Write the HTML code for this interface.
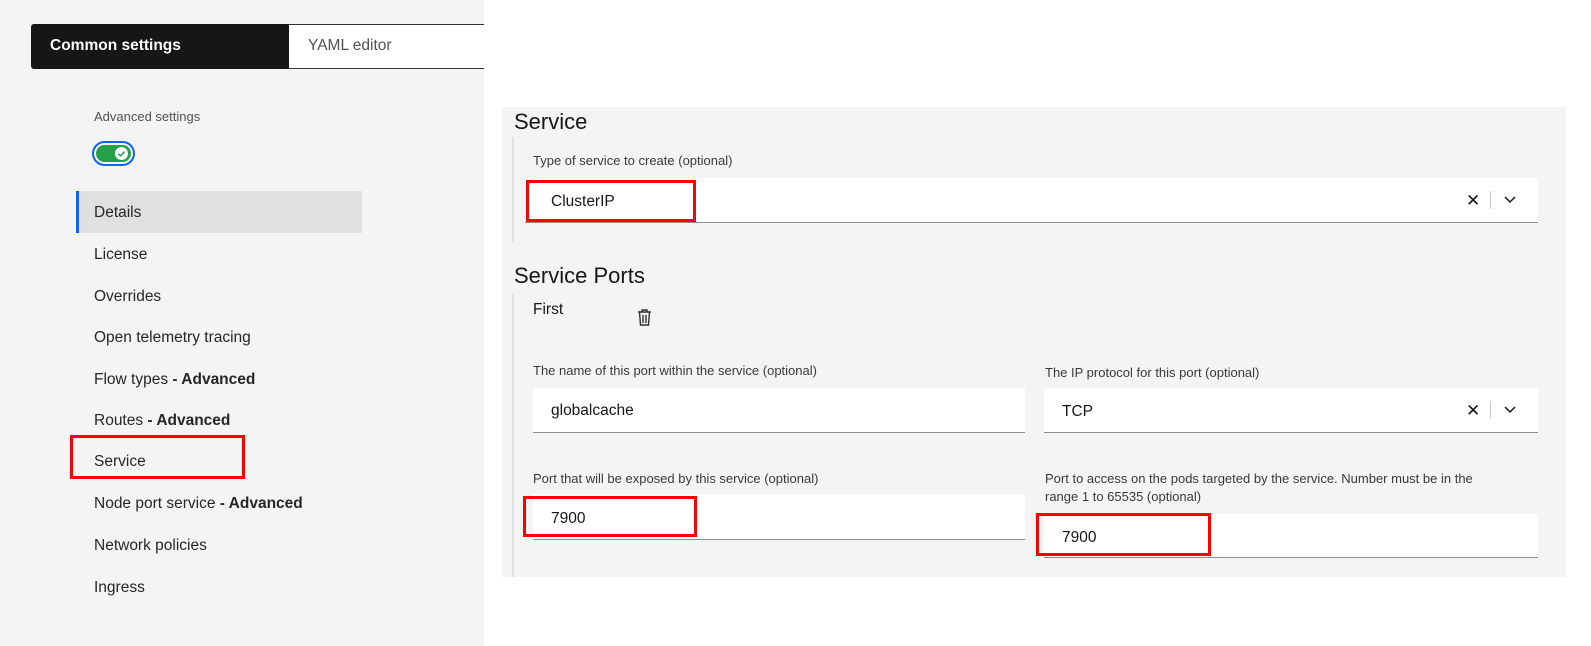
<!DOCTYPE html>
<html><head><meta charset="utf-8"><style>
*{box-sizing:border-box;margin:0;padding:0}
body{width:1591px;height:646px;background:#fff;font-family:"Liberation Sans",sans-serif;color:#161616;position:relative;overflow:hidden}
.a{position:absolute}
.left{left:0;top:0;width:484px;height:646px;background:#f4f4f4}
.nav{left:94px;font-size:15.5px;color:#262626;line-height:20px}
.lbl{font-size:13px;color:#393939;line-height:16px}
.inp{background:#fff;border-bottom:1.5px solid #8d8d8d}
.val{font-size:15.5px;color:#161616}
.red{border:3px solid #f00}
</style></head><body>
<div class="a left"></div>
<div class="a" style="left:31px;top:24px;width:258px;height:45px;background:#161616;border-radius:3px 0 0 3px"></div>
<div class="a" style="left:50px;top:37px;font-size:15.5px;font-weight:bold;color:#fff">Common settings</div>
<div class="a" style="left:289px;top:24px;width:195px;height:45px;background:#fff;border-top:1px solid #333;border-bottom:1px solid #333"></div>
<div class="a" style="left:308px;top:37px;font-size:15.5px;color:#525252">YAML editor</div>
<div class="a lbl" style="left:94px;top:109px;color:#525252">Advanced settings</div>
<div class="a" style="left:92px;top:141px;width:43px;height:25px;border:2px solid #0f62fe;border-radius:13px;padding:2px"><div style="width:35px;height:17px;background:#24a148;border-radius:9px;position:relative"><div style="position:absolute;right:3px;top:2px;width:13px;height:13px;border-radius:50%;background:#fff"><svg width="13" height="13" viewBox="0 0 13 13"><path d="M3.5 6.8l2 2 4-4" stroke="#24a148" stroke-width="1.6" fill="none"/></svg></div></div></div>
<div class="a" style="left:76px;top:191px;width:286px;height:42px;background:#e0e0e0;border-left:3px solid #0f62fe"></div>
<div class="a nav" style="top:203px">Details</div>
<div class="a nav" style="top:245px">License</div>
<div class="a nav" style="top:287px">Overrides</div>
<div class="a nav" style="top:328px">Open telemetry tracing</div>
<div class="a nav" style="top:370px">Flow types <b>- Advanced</b></div>
<div class="a nav" style="top:411px">Routes <b>- Advanced</b></div>
<div class="a nav" style="top:452px">Service</div>
<div class="a nav" style="top:494px">Node port service <b>- Advanced</b></div>
<div class="a nav" style="top:536px">Network policies</div>
<div class="a nav" style="top:578px">Ingress</div>
<div class="a red" style="left:70px;top:435px;width:175px;height:44px"></div>

<div class="a" style="left:502px;top:107px;width:1064px;height:470px;background:#f4f4f4"></div>
<div class="a" style="left:514px;top:109px;font-size:22px;color:#161616">Service</div>
<div class="a" style="left:512px;top:137px;width:2px;height:106px;background:#e0e0e0"></div>
<div class="a lbl" style="left:533px;top:153px">Type of service to create (optional)</div>
<div class="a inp" style="left:525px;top:178px;width:1013px;height:45px"></div>
<div class="a val" style="left:551px;top:193px">ClusterIP</div>
<div class="a" style="left:1466px;top:191px;font-size:17px">✕</div>
<div class="a" style="left:1490px;top:191px;width:1px;height:18px;background:#ccc"></div>
<svg class="a" style="left:1503px;top:194px" width="14" height="12"><path d="M2 3l5 5 5-5" stroke="#161616" stroke-width="1.5" fill="none"/></svg>
<div class="a red" style="left:526px;top:180px;width:170px;height:42px"></div>

<div class="a" style="left:514px;top:263px;font-size:22px">Service Ports</div>
<div class="a" style="left:512px;top:293px;width:2px;height:284px;background:#e0e0e0"></div>
<div class="a" style="left:533px;top:301px;font-size:15.5px">First</div>
<svg class="a" style="left:637px;top:309px" width="15" height="18" viewBox="0 0 15 18"><path d="M1 3h13M5 3V1h5v2M2.5 3l1 13h8l1-13M6 6v8M9 6v8" stroke="#333" stroke-width="1.4" fill="none"/></svg>

<div class="a lbl" style="left:533px;top:363px">The name of this port within the service (optional)</div>
<div class="a inp" style="left:533px;top:388px;width:492px;height:45px"></div>
<div class="a val" style="left:551px;top:402px">globalcache</div>
<div class="a lbl" style="left:1045px;top:365px">The IP protocol for this port (optional)</div>
<div class="a inp" style="left:1044px;top:388px;width:494px;height:45px"></div>
<div class="a val" style="left:1062px;top:403px">TCP</div>
<div class="a" style="left:1466px;top:401px;font-size:17px">✕</div>
<div class="a" style="left:1490px;top:401px;width:1px;height:18px;background:#ccc"></div>
<svg class="a" style="left:1503px;top:404px" width="14" height="12"><path d="M2 3l5 5 5-5" stroke="#161616" stroke-width="1.5" fill="none"/></svg>

<div class="a lbl" style="left:533px;top:471px">Port that will be exposed by this service (optional)</div>
<div class="a inp" style="left:533px;top:494px;width:492px;height:46px"></div>
<div class="a val" style="left:551px;top:510px">7900</div>
<div class="a red" style="left:523px;top:496px;width:174px;height:41px"></div>
<div class="a lbl" style="left:1045px;top:470px;width:460px;line-height:18px">Port to access on the pods targeted by the service. Number must be in the range 1 to 65535 (optional)</div>
<div class="a inp" style="left:1044px;top:514px;width:494px;height:44px"></div>
<div class="a val" style="left:1062px;top:529px">7900</div>
<div class="a red" style="left:1036px;top:513px;width:175px;height:43px"></div>
</body></html>
